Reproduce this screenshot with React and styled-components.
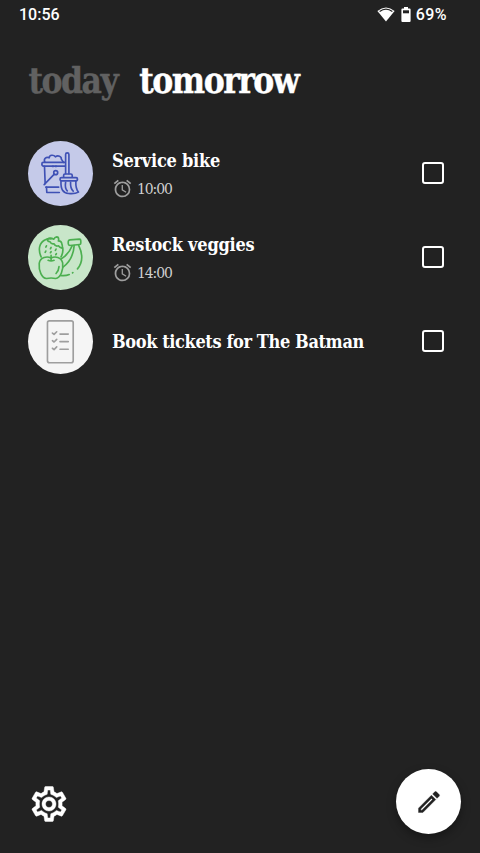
import React, { useState } from "react";
import styled, { createGlobalStyle } from "styled-components";
import { MdAccessAlarm, MdOutlineEdit, MdOutlineSettings } from "react-icons/md";

const TASKS = [
  { id: 1, title: "Service bike", time: "10:00", kind: "cleaning", spacing: -0.24 },
  { id: 2, title: "Restock veggies", time: "14:00", kind: "food", spacing: -0.22 },
  { id: 3, title: "Book tickets for The Batman", kind: "list", spacing: -0.38 },
];

const KINDS = {
  cleaning: { background: "#c5cae9", color: "#3f51b5", Icon: CleaningIcon },
  food: { background: "#c8e6c9", color: "#4caf50", Icon: FoodIcon },
  list: { background: "#f5f5f5", color: "#9e9e9e", Icon: ListIcon },
};

function CleaningIcon() {
  return (
    <Drawing viewBox="24 25 197 197">
      <path d="M75 89 C70 78 80 72 88 76 C89 66 102 66 107 73 C115 67 126 72 125 80 L132 90" />
      <path d="M136 90 H70 Q66 90 66 95 Q66 101 71 101 H136" />
      <path d="M74 102 L76 154 M80 165 L81 181 H119" />
      <path d="M98 102 H101 M107 102 H110" />
      <circle cx="108" cy="121" r="6" />
      <path d="M103 126 L73 157 M78 165 H117" />
      <path d="M138 124 V66 Q138 61 143 61 Q148 61 148 66 V124" />
      <path d="M132 135 V129 Q132 125 136 125 H154 Q158 125 158 129 V135" />
      <path d="M125 136 H170 Q174 136 174 140 Q174 146 169 146 H125 Q121 146 121 141 Q121 136 125 136 Z" />
      <path d="M124 147 Q122 183 147 184 Q166 186 177 180 Q168 170 169 147" />
      <path d="M138 150 Q135 168 143 176 M153 150 Q152 169 161 177" />
    </Drawing>
  );
}

function FoodIcon() {
  return (
    <Drawing viewBox="24 25 197 197">
      <path d="M64 122 C54 100 57 78 78 69 Q86 65 94 67 M129 93 Q132 107 124 122" />
      <path d="M84 68 Q91 61 102 68 Q105 62 111 61 Q117 61 117 69 L116 73 Q126 73 127 84 Q130 90 127 95 Q120 94 116 88 Q107 91 103 82 Q94 84 91 76 Q84 76 82 70" />
      <path d="M80 88 L78 92 M94 93 L92 97 M78 104 L76 108 M94 106 L92 109 M109 98 L107 102 M110 112 L108 115" />
      <path d="M94 125 C82 119 61 122 58 141 C56 164 66 187 80 187 Q94 184 108 187 C123 186 132 160 129 140 C125 122 106 119 94 125 Z" />
      <path d="M94 117 V134 M85 132 Q94 136 103 132 M118 151 Q117 164 109 172" />
      <path d="M151 70 L180 68 Q184 68 184 73 V80 Q184 84 180 84 L151 87 Q146 87 146 82 V75 Q146 71 151 70 Z" />
      <path d="M158 88 Q148 113 126 127 M164 87 Q161 129 131 152 M177 85 C190 112 190 139 174 158 M160 169 L159 170 M149 175 Q138 180 122 178" />
    </Drawing>
  );
}

function ListIcon() {
  return (
    <Drawing viewBox="24 25 197 197">
      <rect x="83" y="61" width="78" height="127" rx="6" />
      {[98, 121, 144].map((y) => (
        <path key={y} d={`M98 ${y} L103 ${y + 4} L111 ${y - 4} M121 ${y + 3} H146`} />
      ))}
    </Drawing>
  );
}

function StatusBar() {
  return (
    <Status>
      <span>10:56</span>
      <StatusRight>
        <svg width="18" height="15" viewBox="0 0 18 15">
          <path d="M0.4 4 Q9 -3.2 17.6 4 L9 14.6 Z" fill="#fff" />
          <path d="M2.6 4.6 Q9 -0.2 15.4 4.6" fill="none" stroke="#222" strokeWidth="1.3" />
        </svg>
        <svg width="10" height="15" viewBox="0 0 10 15">
          <path d="M3 0 H7 V1.6 H8.6 Q9.6 1.6 9.6 2.6 V14 Q9.6 15 8.6 15 H1.4 Q0.4 15 0.4 14 V2.6 Q0.4 1.6 1.4 1.6 H3 Z" fill="#fff" />
          <path d="M2 3.3 H8 V6.3 H2 Z" fill="#222" />
        </svg>
        <span>69%</span>
      </StatusRight>
    </Status>
  );
}

function TaskRow({ task }) {
  const [done, setDone] = useState(false);
  const { Icon, background, color } = KINDS[task.kind];
  return (
    <Row>
      <Badge $background={background} $color={color}>
        <Icon />
      </Badge>
      <Details>
        <Title $spacing={task.spacing}>{task.title}</Title>
        {task.time && (
          <Time>
            <MdAccessAlarm size={21} />
            <span>{task.time}</span>
          </Time>
        )}
      </Details>
      <Checkbox
        type="button"
        role="checkbox"
        aria-checked={done}
        aria-label={task.title}
        $done={done}
        onClick={() => setDone(!done)}
      />
    </Row>
  );
}

function App() {
  const [day, setDay] = useState("tomorrow");
  return (
    <>
      <GlobalStyle />
      <Screen>
        <StatusBar />
        <Tabs>
          {["today", "tomorrow"].map((name) => (
            <Tab key={name} $active={day === name} onClick={() => setDay(name)}>
              {name}
            </Tab>
          ))}
        </Tabs>
        <List>
          {TASKS.map((task) => (
            <TaskRow key={task.id} task={task} />
          ))}
        </List>
        <Footer>
          <SettingsButton aria-label="Settings">
            <MdOutlineSettings size={42} />
          </SettingsButton>
          <EditButton aria-label="Edit">
            <MdOutlineEdit size={28} />
          </EditButton>
        </Footer>
      </Screen>
    </>
  );
}

export default App;

const GlobalStyle = createGlobalStyle`
  * {
    box-sizing: border-box;
  }
  body {
    margin: 0;
    background: #222222;
  }
  button {
    margin: 0;
    padding: 0;
    border: none;
    background: none;
    cursor: pointer;
  }
`;
const Screen = styled.div`
  display: flex;
  flex-direction: column;
  height: 100vh;
  overflow: hidden;
  color: #ffffff;
  background: #222222;
  font-family: "Roboto Slab", "DejaVu Serif", serif;
`;
const Status = styled.div`
  display: flex;
  justify-content: space-between;
  align-items: center;
  height: 28px;
  padding: 0 33px 0 19px;
  font: 500 16px "Roboto", sans-serif;
`;
const StatusRight = styled.div`
  display: flex;
  align-items: center;
  gap: 6px;
  span {
    margin-left: -1px;
    letter-spacing: 0.4px;
  }
`;
const Tabs = styled.div`
  display: flex;
  gap: 22px;
  height: 105px;
  padding: 28px 28px 0 28.5px;
`;
const Tab = styled.button`
  height: 50px;
  color: ${({ $active }) => ($active ? "#ffffff" : "#616161")};
  font: bold 35px/50px "Roboto Slab", "DejaVu Serif", serif;
  font-stretch: condensed;
  letter-spacing: -1.5px;
  -webkit-text-stroke: 0.4px currentColor;
`;
const List = styled.div`
  display: flex;
  flex-direction: column;
  gap: 19px;
  padding: 8px 36px 0 28px;
`;
const Row = styled.div`
  display: flex;
  align-items: center;
  height: 65px;
`;
const Badge = styled.div`
  flex: none;
  width: 65px;
  height: 65px;
  border-radius: 50%;
  background: ${({ $background }) => $background};
  color: ${({ $color }) => $color};
`;
const Drawing = styled.svg`
  display: block;
  width: 100%;
  height: 100%;
  fill: none;
  stroke: currentColor;
  stroke-width: 5;
  stroke-linecap: round;
  stroke-linejoin: round;
`;
const Details = styled.div`
  flex: 1;
  padding-left: 19px;
`;
const Title = styled.div`
  font-size: 18px;
  font-weight: bold;
  font-stretch: condensed;
  line-height: 28px;
  white-space: nowrap;
  letter-spacing: ${({ $spacing }) => $spacing}px;
`;
const Time = styled.div`
  display: flex;
  align-items: center;
  gap: 4px;
  height: 27px;
  margin-bottom: -2px;
  color: #9e9e9e;
  span {
    color: #d0d0d0;
    font-size: 15.5px;
    font-weight: 300;
    font-stretch: condensed;
    letter-spacing: -1.1px;
  }
`;
const Checkbox = styled.button`
  flex: none;
  width: 22px;
  height: 22px;
  && {
    margin-bottom: 1px;
    border: 2.5px solid #ffffff;
    border-radius: 3px;
    background: ${({ $done }) => ($done ? "#ffffff" : "transparent")};
  }
`;
const Footer = styled.div`
  display: flex;
  justify-content: space-between;
  align-items: center;
  margin-top: auto;
  padding: 0 19px 19px 28px;
`;
const SettingsButton = styled.button`
  height: 42px;
  margin-top: 4px;
  color: #ffffff;
  path:not([fill="none"]) {
    stroke: currentColor;
    stroke-width: 0.25px;
  }
`;
const EditButton = styled.button`
  display: flex;
  align-items: center;
  justify-content: center;
  width: 65px;
  height: 65px;
  && {
    border-radius: 50%;
    color: #222222;
    background: #ffffff;
    box-shadow: 0 4px 10px rgba(0, 0, 0, 0.35);
  }
  path:not([fill="none"]) {
    stroke: currentColor;
    stroke-width: 0.3px;
  }
`;
